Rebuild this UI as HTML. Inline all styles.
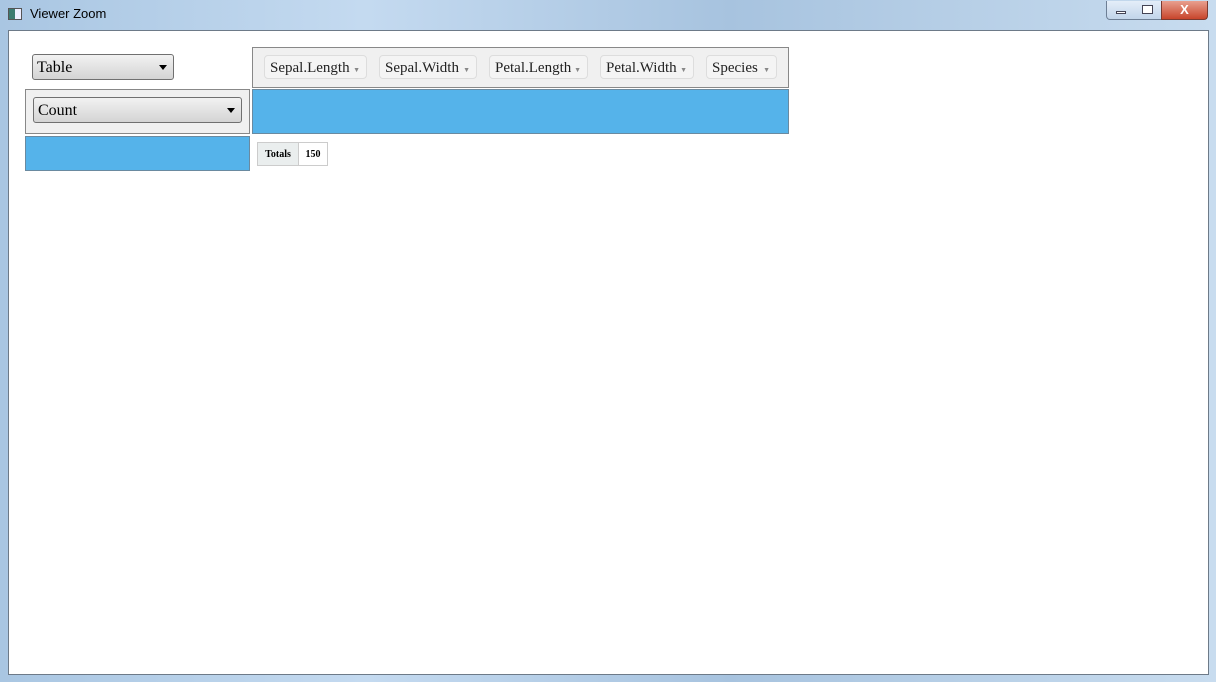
<!DOCTYPE html>
<html><head><style>
body{margin:0;width:1216px;height:682px;overflow:hidden;background:linear-gradient(90deg,#a9c6e2,#c4daf0 30%,#a7c3df 60%,#c8dcef);font-family:"Liberation Serif",serif;position:relative}
.a{position:absolute;box-sizing:border-box}
.client{left:8px;top:30px;width:1201px;height:645px;background:#fff;border:1px solid #6d7a88}
.sel{border:1px solid #707070;border-radius:3px;background:linear-gradient(#f2f2f2,#d4d4d4);font-size:16px;padding-left:4px;padding-top:2px;line-height:22px;color:#000}
.sel:after{content:"";position:absolute;right:6px;top:10px;border:4px solid transparent;border-top:5px solid #000;border-bottom:0}
.pill{border:1px solid #ddd;border-radius:4px;background:#f4f4f4;font-size:15px;line-height:21px;padding-left:5px;padding-top:2px;color:#222}
.pill:after{content:"▼";font-size:7px;color:#888;position:absolute;right:6px;top:4px}
.blue{background:#55b3ea;border:1px solid #6a8aa0}
</style></head><body>
<div class="a" style="left:8px;top:8px;width:14px;height:12px;border:1px solid #555;background:linear-gradient(90deg,#3c7a70 50%,#eef 50%)"></div>
<div class="a" style="left:30px;top:6px;font-family:'Liberation Sans',sans-serif;font-size:13px;color:#000">Viewer Zoom</div>
<div class="a" style="left:1106px;top:1px;width:56px;height:19px;border:1px solid #6d7f95;border-top:0;border-radius:0 0 0 4px;background:linear-gradient(#e4eef9,#c2d5ea)"></div>
<div class="a" style="left:1116px;top:11px;width:10px;height:3px;background:#fff;border:1px solid #445"></div>
<div class="a" style="left:1142px;top:5px;width:11px;height:9px;border:1px solid #445;background:#fff"></div>
<div class="a" style="left:1161px;top:1px;width:47px;height:19px;border:1px solid #7a3a30;border-top:0;border-radius:0 0 4px 0;background:linear-gradient(#e8a08f,#c8452c);color:#fff;font:bold 13px 'Liberation Sans',sans-serif;text-align:center;line-height:17px">X</div>
<div class="a client"></div>
<div class="a sel" style="left:32px;top:54px;width:142px;height:26px">Table</div>
<div class="a" style="left:252px;top:47px;width:537px;height:41px;background:#f0f0f0;border:1px solid #888"></div>
<div class="a pill" style="left:264px;top:55px;width:103px;height:24px">Sepal.Length</div>
<div class="a pill" style="left:379px;top:55px;width:98px;height:24px">Sepal.Width</div>
<div class="a pill" style="left:489px;top:55px;width:99px;height:24px">Petal.Length</div>
<div class="a pill" style="left:600px;top:55px;width:94px;height:24px">Petal.Width</div>
<div class="a pill" style="left:706px;top:55px;width:71px;height:24px">Species</div>
<div class="a" style="left:25px;top:89px;width:225px;height:45px;background:#f0f0f0;border:1px solid #888"></div>
<div class="a sel" style="left:33px;top:97px;width:209px;height:26px">Count</div>
<div class="a blue" style="left:252px;top:89px;width:537px;height:45px"></div>
<div class="a blue" style="left:25px;top:136px;width:225px;height:35px"></div>
<div class="a" style="left:257px;top:142px;width:42px;height:24px;background:#eaeeee;border:1px solid #ccc;font-size:10px;font-weight:bold;text-align:center;line-height:24px">Totals</div>
<div class="a" style="left:298px;top:142px;width:30px;height:24px;background:#fff;border:1px solid #ccc;font-size:10px;font-weight:bold;text-align:center;line-height:24px">150</div>
</body></html>
